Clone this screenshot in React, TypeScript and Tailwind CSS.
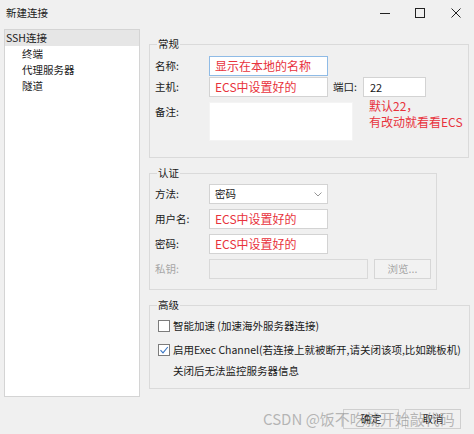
import React from "react";

const font = { fontFamily: '"Noto Sans CJK SC", "Noto Sans", sans-serif' };

function Input({ w, text, focus, h = 20 }: { w: string; text?: string; focus?: boolean; h?: number }) {
  return (
    <div
      className={`${w} ${h === 20 ? "h-[20px]" : "h-[22px]"} bg-white border ${focus ? "border-[#8fbbe6]" : "border-[#d3d3d3]"} flex items-center pl-[5px] text-[12px] text-[#e8323c] leading-none`}
    >
      {text}
    </div>
  );
}

function Label({ children, grey }: { children: React.ReactNode; grey?: boolean }) {
  return (
    <div className={`w-[54px] shrink-0 text-[10.5px] leading-[14px] ${grey ? "text-[#a6a6a6]" : "text-[#1a1a1a]"}`}>
      {children}
    </div>
  );
}

export default function App() {
  return (
    <div className="w-[474px] h-[434px] bg-[#f0f0f0] relative overflow-hidden text-[#1a1a1a]" style={font}>
      {/* title bar */}
      <div className="h-[29px] flex items-center justify-between">
        <div className="pl-[6px] text-[10.5px] leading-[14px] -mt-[4px]">新建连接</div>
        <div className="flex items-center -mt-[4px]">
          <svg width="12" height="12" viewBox="0 0 12 12" className="mr-[23px]">
            <line x1="1" y1="6.5" x2="11" y2="6.5" stroke="#222" strokeWidth="1" />
          </svg>
          <svg width="12" height="12" viewBox="0 0 12 12" className="mr-[24px]">
            <rect x="1.5" y="1.5" width="9" height="9" fill="none" stroke="#222" strokeWidth="1" />
          </svg>
          <svg width="12" height="12" viewBox="0 0 12 12" className="mr-[12px]">
            <path d="M1.5 1.5 L10.5 10.5 M10.5 1.5 L1.5 10.5" stroke="#222" strokeWidth="1" />
          </svg>
        </div>
      </div>

      <div className="flex">
        {/* tree */}
        <div className="ml-[4px] w-[136px] h-[368px] bg-white border border-[#d4d4d4] text-[10.5px] leading-[16px]">
          <div className="h-[16px] bg-[#e6e6e6] pl-[1px]">SSH连接</div>
          <div className="h-[16px] pl-[17px]">终端</div>
          <div className="h-[16px] pl-[17px]">代理服务器</div>
          <div className="h-[16px] pl-[17px]">隧道</div>
        </div>

        {/* right column */}
        <div className="ml-[9px] flex flex-col">
          {/* 常规 */}
          <fieldset className="mt-[7px] w-[285px] border border-[#dadada] px-[5px] pb-[16px]">
            <legend className="ml-[2px] px-[1px] text-[10.5px] leading-[16px]">常规</legend>
            <div className="pt-[4px] flex items-center h-[24px]">
              <Label>名称:</Label>
              <Input w="w-[119px]" text="显示在本地的名称" focus />
            </div>
            <div className="mt-[1px] flex items-center h-[20px]">
              <Label>主机:</Label>
              <Input w="w-[119px]" text="ECS中设置好的" />
              <div className="ml-[5px] w-[30px] text-[10.5px] leading-[14px]">端口:</div>
              <div className="w-[63px] h-[20px] bg-white border border-[#d3d3d3] flex items-center pl-[6px] text-[11px]">
                22
              </div>
            </div>
            <div className="mt-[5px] flex items-start">
              <div className="pt-[3px]">
                <Label>备注:</Label>
              </div>
              <div className="w-[144px] h-[39px] bg-white border border-[#f4f4f4]" />
              <div className="ml-[16px] -mt-[4px] text-[12px] leading-[16px] text-[#e8323c] whitespace-nowrap">
                <div>默认22，</div>
                <div>有改动就看看ECS</div>
              </div>
            </div>
          </fieldset>

          {/* 认证 */}
          <fieldset className="mt-[7px] w-[288px] border border-[#dadada] px-[5px] pb-[10px]">
            <legend className="ml-[2px] px-[1px] text-[10.5px] leading-[16px]">认证</legend>
            <div className="pt-[3px] flex items-center">
              <Label>方法:</Label>
              <div className="w-[119px] h-[20px] bg-white border border-[#d3d3d3] flex items-center justify-between pl-[5px] pr-[5px] text-[10.5px]">
                <span>密码</span>
                <svg width="8" height="5" viewBox="0 0 8 5">
                  <path d="M0.5 0.5 L4 4 L7.5 0.5" fill="none" stroke="#8a8a8a" strokeWidth="0.9" />
                </svg>
              </div>
            </div>
            <div className="mt-[5px] flex items-center">
              <Label>用户名:</Label>
              <Input w="w-[119px]" text="ECS中设置好的" />
            </div>
            <div className="mt-[5px] flex items-center">
              <Label>密码:</Label>
              <Input w="w-[119px]" text="ECS中设置好的" />
            </div>
            <div className="mt-[5px] flex items-center">
              <Label grey>私钥:</Label>
              <div className="w-[159px] h-[20px] bg-[#f0f0f0] border border-[#d9d9d9]" />
              <div className="ml-[6px] w-[57px] h-[20px] bg-[#f2f2f2] border border-[#d6d6d6] flex items-center justify-center text-[10.5px] text-[#a6a6a6]">
                浏览...
              </div>
            </div>
          </fieldset>

          {/* 高级 */}
          <fieldset className="mt-[7px] w-[315px] border border-[#dadada] px-[8px] pb-[8px] text-[10.5px]">
            <legend className="ml-[-1px] px-[1px] text-[10.5px] leading-[16px]">高级</legend>
            <div className="pt-[4px] flex items-center h-[22px]">
              <div className="w-[12px] h-[12px] bg-white border border-[#7c7c7c]" />
              <span className="ml-[3px]">智能加速 (加速海外服务器连接)</span>
            </div>
            <div className="mt-[6px] flex items-center h-[18px]">
              <div className="w-[12px] h-[12px] bg-white border border-[#7c7c7c] flex items-center justify-center">
                <svg width="10" height="10" viewBox="0 0 10 10">
                  <path d="M1.5 5.2 L4 7.8 L8.8 2" fill="none" stroke="#3a76c4" strokeWidth="1.1" />
                </svg>
              </div>
              <span className="ml-[3px] whitespace-nowrap">启用Exec Channel(若连接上就被断开,请关闭该项,比如跳板机)</span>
            </div>
            <div className="mt-[3px] flex items-center h-[18px] pl-[15px]">关闭后无法监控服务器信息</div>
          </fieldset>
        </div>
      </div>

      {/* buttons */}
      <div className="mt-[12px] flex justify-end pr-[13px] gap-[6px] text-[10.5px]">
        <div className="w-[56px] h-[20px] bg-[#f0f0f0] border border-[#cfcfcf] flex items-center justify-center">确定</div>
        <div className="w-[56px] h-[20px] bg-[#f0f0f0] border border-[#cfcfcf] flex items-center justify-center">取消</div>
      </div>

      {/* watermark */}
      <div className="absolute left-[263px] top-[409px] text-[15px] leading-[20px] text-[#8c8c8c]/60 whitespace-nowrap pointer-events-none">
        CSDN @饭不吃就开始敲代码
      </div>
    </div>
  );
}
